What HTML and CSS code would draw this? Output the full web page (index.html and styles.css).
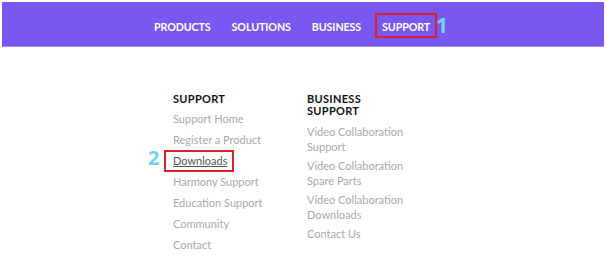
FILE: index.html
```html
<!DOCTYPE html>
<html>
<head>
<meta charset="utf-8">
<link rel="stylesheet" href="styles.css">
</head>
<body>
<div class="page">
  <nav class="topbar">
    <ul class="nav">
      <li class="nav-item">PRODUCTS</li>
      <li class="nav-item">SOLUTIONS</li>
      <li class="nav-item">BUSINESS</li>
      <li class="nav-item active"><span class="mark">SUPPORT</span><span class="step step-1">1</span></li>
    </ul>
  </nav>
  <div class="menu">
    <div class="col col-support">
      <h3 class="col-title">SUPPORT</h3>
      <ul class="links">
        <li>Support Home</li>
        <li>Register a Product</li>
        <li class="hl"><span class="step step-2">2</span><span class="mark2">Downloads</span></li>
        <li>Harmony Support</li>
        <li>Education Support</li>
        <li>Community</li>
        <li>Contact</li>
      </ul>
    </div>
    <div class="col col-business">
      <h3 class="col-title">BUSINESS<br>SUPPORT</h3>
      <ul class="links wrap">
        <li>Video Collaboration<br>Support</li>
        <li>Video Collaboration<br>Spare Parts</li>
        <li>Video Collaboration<br>Downloads</li>
        <li>Contact Us</li>
      </ul>
    </div>
  </div>
</div>
</body>
</html>
```
FILE: styles.css
```css
* { box-sizing: border-box; }
html, body { margin: 0; padding: 0; background: #fff; }
body { font-family: Lato, "Open Sans", sans-serif; }
.page { width: 606px; height: 262px; padding: 2px 2px 0 2px; }
.topbar {
  height: 45px;
  background: #7858f0;
  border-bottom: 1px solid #a48cf6;
}
.nav {
  list-style: none; margin: 0; padding: 4px 0 0 152px;
  display: flex; align-items: stretch; height: 44px; gap: 21px;
}
.nav-item {
  position: relative;
  color: #fff; font-weight: 700; font-size: 10.7px;
  display: flex; align-items: center;
  letter-spacing: -0.1px;
}
.nav-item.active::after {
  content: ""; position: absolute; left: 1px; right: 0; bottom: -5px; height: 4px; background: #fff;
}
.mark {
  position: relative; display: inline-block; line-height: 13px;
}
.mark::before {
  content: ""; position: absolute; left: -7px; right: -7px; top: -7px; bottom: -5px;
  border: 2px solid #d8212d;
}
.step { color: #6fd6ee; font-weight: 700; font-size: 21px; font-family: "Open Sans", sans-serif; }
.step-1 { position: absolute; left: 54px; top: 5px; }
.menu { display: flex; padding: 46px 0 0 171px; }
.col-support { width: 134px; }
.col-title {
  margin: 0 0 3px; font-size: 11px; font-weight: 700; color: #111;
  letter-spacing: 0.3px; line-height: 12px;
}
.links { list-style: none; margin: 0; padding: 0; color: #a9a9a9; font-size: 11px; }
.links li { line-height: 21px; }
.links.wrap { margin-top: 8px; }
.links.wrap li { line-height: 14.5px; margin-bottom: 5px; }
.hl { position: relative; }
.mark2 { position: relative; color: #555; text-decoration: underline; }
.mark2::before {
  content: ""; position: absolute; left: -9px; right: -7px; top: -4px; bottom: -5px;
  border: 2px solid #d8212d;
}
.step-2 { position: absolute; left: -25px; top: -3px; font-size: 20px; }
```
